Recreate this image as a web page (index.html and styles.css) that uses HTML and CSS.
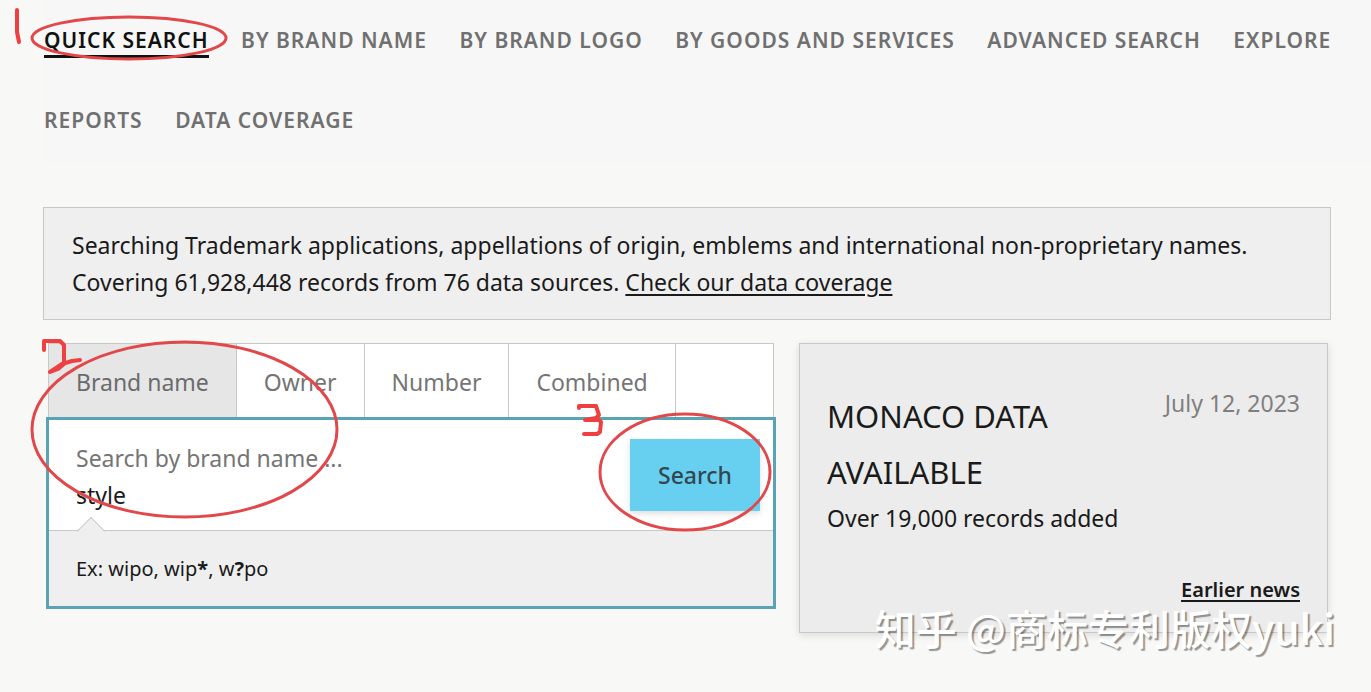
FILE: index.html
```html
<!DOCTYPE html>
<html lang="en">
<head>
    <meta charset="UTF-8">
    <meta name="viewport" content="width=device-width, initial-scale=1.0">
    <title>Global Brand Database - Quick Search</title>
    <link rel="stylesheet" href="styles.css">
</head>
<body>
    <nav class="main-nav">
        <a href="#" class="active">Quick search</a>
        <a href="#">By brand name</a>
        <a href="#">By brand logo</a>
        <a href="#">By goods and services</a>
        <a href="#">Advanced search</a>
        <a href="#"><span>Explore</span> <span>reports</span></a>
        <a href="#">Data coverage</a>
    </nav>

    <main class="container">
        <div class="notice">
            <p>Searching Trademark applications, appellations of origin, emblems and international non-proprietary names.</p>
            <p>Covering 61,928,448 records from 76 data sources. <a href="#">Check our data coverage</a></p>
        </div>

        <div class="columns">
            <form class="search">
                <div class="tabs">
                    <button type="button" class="tab active">Brand name</button>
                    <button type="button" class="tab">Owner</button>
                    <button type="button" class="tab">Number</button>
                    <button type="button" class="tab">Combined</button>
                </div>
                <div class="search-box">
                    <div class="search-row">
                        <div class="field">
                            <label for="brand">Search by brand name ...</label>
                            <input type="text" id="brand" value="style">
                        </div>
                        <button type="submit" class="search-btn">Search</button>
                    </div>
                    <p class="hint">Ex: wipo, wip<b>*</b>, w<b>?</b>po</p>
                </div>
            </form>

            <aside class="news">
                <div class="news-head">
                    <h2>MONACO DATA AVAILABLE</h2>
                    <time datetime="2023-07-12">July 12, 2023</time>
                </div>
                <p>Over 19,000 records added</p>
                <a href="#" class="earlier">Earlier news</a>
            </aside>
        </div>
    </main>

    <!-- hand-drawn step marks -->
    <svg class="marks" width="800" height="560" viewBox="0 0 800 560" aria-hidden="true">
        <ellipse cx="129" cy="38" rx="97" ry="21"/>
        <ellipse cx="184.500" cy="429.500" rx="152.500" ry="87.500"/>
        <ellipse cx="685" cy="472" rx="85" ry="58"/>
        <path class="pen" d="M17 10V32L19 42"/>
        <path class="pen" d="M44 350V341H60L64 345V364L58 369L50 372L62 364L72 361L80 360"/>
        <path class="pen" d="M579 408V406H596L599 415L596 418L585 420H599L601 422L600 432L597 434H584"/>
    </svg>
    <div class="watermark">知乎 @商标专利版权yuki</div>
</body>
</html>
```

FILE: styles.css
```css
* {
    margin: 0;
    padding: 0;
    box-sizing: border-box;
}

body {
    position: relative;
    font-family: "Noto Sans", "Noto Sans CJK SC", sans-serif;
    font-size: 23px;
    line-height: 37px;
    color: #1a1a1a;
    background: #f8f8f6;
    min-height: 100vh;
}

a {
    color: inherit;
}

button,
input {
    font: inherit;
    color: inherit;
    border: none;
    background: none;
}

.main-nav {
    margin-left: 43px;
    padding: 0 1px 3px;
    background: #f7f7f7;
    font-size: 21px;
    font-weight: 600;
    line-height: 80px;
    letter-spacing: 1px;
    text-transform: uppercase;
    color: #707070;
}

.main-nav a {
    margin-right: 26px;
    padding-bottom: 1px;
    text-decoration: none;
}

.main-nav .active {
    color: #111;
    border-bottom: 3px solid #111;
}

.container {
    padding: 44px 40px 40px 43px;
}

.notice {
    padding: 19px 28px 18px;
    background: #efefef;
    border: 1px solid #c8c8c8;
}

.notice a {
    text-underline-offset: 3px;
}

.columns {
    display: grid;
    grid-template-columns: 730fr 529fr;
    align-items: start;
    gap: 23px;
    margin-top: 23px;
    padding: 0 3px;
}

.tabs {
    display: flex;
    height: 74px;
    margin: 0 2px;
    background: #fff;
    border: 1px solid #c8c8c8;
    border-bottom: none;
}

.tab {
    padding: 4px 27px 0;
    color: #757575;
    border-right: 1px solid #c8c8c8;
    cursor: pointer;
}

.tab.active {
    color: #6b6b6b;
    background: #e6e6e6;
}

.search-box {
    border: 3px solid #5aa3b4;
    background: #fff;
}

.search-row {
    display: flex;
    align-items: flex-start;
    padding: 19px 13px 0 27px;
    height: 110px;
}

.field {
    flex: 1;
    min-width: 0;
    padding-top: 1px;
}

.field label {
    display: block;
    color: #757575;
}

.field input {
    display: block;
    width: 100%;
    height: 37px;
    outline: none;
}

.search-btn {
    padding: 0 28px;
    height: 72px;
    font-weight: 500;
    color: #344750;
    background: #67d0f1;
    box-shadow: 0 3px 6px rgba(0,0,0,0.12);
    cursor: pointer;
}

.hint {
    position: relative;
    padding: 19px 27px;
    font-size: 20px;
    background: #efefef;
    border-top: 1px solid #c8c8c8;
}

/* little arrow pointing at the field */
.hint::before {
    content: '';
    position: absolute;
    top: -10px;
    left: 32px;
    width: 19px;
    height: 19px;
    background: linear-gradient(135deg, #efefef 50%, transparent 50%);
    border: 1px solid #c8c8c8;
    border-right: none;
    border-bottom: none;
    transform: rotate(45deg);
}

.news {
    padding: 41px 27px 24px;
    background: #ececec;
    border: 1px solid #c8c8c8;
    box-shadow: 0 2px 8px rgba(0,0,0,0.12);
}

.news-head {
    display: flex;
    justify-content: space-between;
    align-items: flex-start;
    gap: 27px;
}

.news h2 {
    margin-top: 3px;
    font-size: 31px;
    font-weight: 400;
    line-height: 56px;
}

.news time {
    color: #808080;
    white-space: nowrap;
}

.earlier {
    display: block;
    margin-top: 34px;
    font-size: 20px;
    font-weight: 600;
    text-align: right;
    text-underline-offset: 3px;
}

.marks {
    position: absolute;
    top: 0;
    left: 0;
    fill: none;
    stroke: #e2474a;
    stroke-width: 3;
    pointer-events: none;
}

.marks .pen {
    stroke: #ee4040;
    stroke-width: 4;
    stroke-linecap: round;
    stroke-linejoin: round;
}

.watermark {
    position: absolute;
    right: 36px;
    bottom: 37px;
    font-family: "Noto Sans CJK SC", sans-serif;
    font-size: 41px;
    font-weight: 500;
    line-height: 56px;
    color: #fff;
    text-shadow: 2px 2px 1px rgba(0,0,0,0.4);
    pointer-events: none;
}
```
